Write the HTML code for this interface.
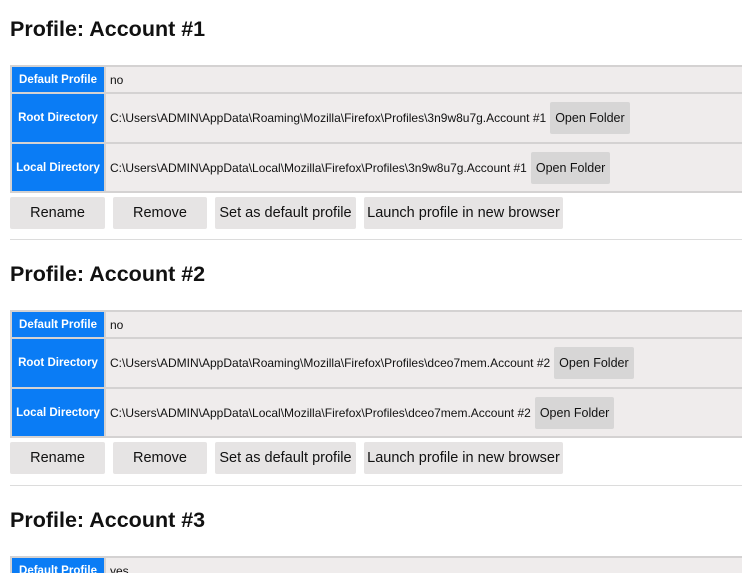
<!DOCTYPE html>
<html><head><meta charset="utf-8"><style>
*{margin:0;padding:0;box-sizing:border-box}
html,body{width:742px;height:573px;overflow:hidden}
body{background:#fff;font-family:"Liberation Sans",sans-serif;color:#111;position:relative}
.sec{position:absolute;left:0;width:742px}
h2{position:absolute;left:10px;top:17px;font-size:21.5px;font-weight:bold;color:#111}
.tbl{position:absolute;left:10px;top:65px;width:740px;background:#d4d2d2;height:128px}
.h{position:absolute;left:2px;width:92px;background:#0a7cf5;color:#fff;font-size:11.5px;font-weight:bold;display:flex;align-items:center;justify-content:center;white-space:nowrap}
.v{position:absolute;left:96px;right:0;background:#efecec;font-size:12px;display:flex;align-items:center;padding-left:4px;white-space:nowrap}
.of{display:inline-block;background:#d7d6d6;padding:0 5px;height:32px;line-height:32px;margin-left:4px;border-radius:2px;font-size:12.5px}
.b{position:absolute;top:197px;height:32px;background:#e6e4e4;font-size:14.5px;display:flex;align-items:center;justify-content:center;border-radius:2px;white-space:nowrap}
.hr{position:absolute;left:10px;width:732px;top:239px;height:1px;background:#dcdcdc}
</style></head><body>

<div class="sec" style="top:0">
<h2>Profile: Account #1</h2>
<div class="tbl">
<div class="h" style="top:2px;height:25px">Default Profile</div><div class="v" style="top:2px;height:25px">no</div>
<div class="h" style="top:29px;height:48px">Root Directory</div><div class="v" style="top:29px;height:48px">C:\Users\ADMIN\AppData\Roaming\Mozilla\Firefox\Profiles\3n9w8u7g.Account #1<span class="of">Open Folder</span></div>
<div class="h" style="top:79px;height:47px">Local Directory</div><div class="v" style="top:79px;height:47px">C:\Users\ADMIN\AppData\Local\Mozilla\Firefox\Profiles\3n9w8u7g.Account #1<span class="of">Open Folder</span></div>
</div>
<div class="b" style="left:10px;width:95px">Rename</div>
<div class="b" style="left:113px;width:94px">Remove</div>
<div class="b" style="left:215px;width:141px">Set as default profile</div>
<div class="b" style="left:364px;width:199px">Launch profile in new browser</div>
<div class="hr"></div>
</div>

<div class="sec" style="top:245px">
<h2>Profile: Account #2</h2>
<div class="tbl">
<div class="h" style="top:2px;height:25px">Default Profile</div><div class="v" style="top:2px;height:25px">no</div>
<div class="h" style="top:29px;height:48px">Root Directory</div><div class="v" style="top:29px;height:48px">C:\Users\ADMIN\AppData\Roaming\Mozilla\Firefox\Profiles\dceo7mem.Account #2<span class="of">Open Folder</span></div>
<div class="h" style="top:79px;height:47px">Local Directory</div><div class="v" style="top:79px;height:47px">C:\Users\ADMIN\AppData\Local\Mozilla\Firefox\Profiles\dceo7mem.Account #2<span class="of">Open Folder</span></div>
</div>
<div class="b" style="left:10px;width:95px">Rename</div>
<div class="b" style="left:113px;width:94px">Remove</div>
<div class="b" style="left:215px;width:141px">Set as default profile</div>
<div class="b" style="left:364px;width:199px">Launch profile in new browser</div>
<div class="hr" style="top:240px"></div>
</div>

<div class="sec" style="top:491px">
<h2>Profile: Account #3</h2>
<div class="tbl" style="height:40px">
<div class="h" style="top:2px;height:25px">Default Profile</div><div class="v" style="top:2px;height:25px">yes</div>
</div>
</div>
</body></html>
